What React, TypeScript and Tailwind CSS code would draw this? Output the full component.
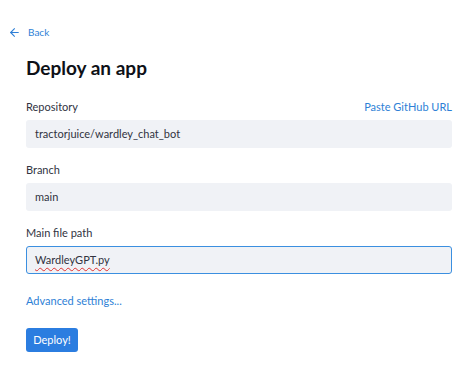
import { ArrowLeft } from 'lucide-react';

function Field({ label, value, focused, extra }: { label: string; value: string; focused?: boolean; extra?: string }) {
  return (
    <div className="flex flex-col">
      <div className="flex items-center justify-between h-[14px] mb-[6px]">
        <span className="text-[11px] text-[#31333f]">{label}</span>
        {extra && <span className="text-[11px] text-[#2e7fd6]">{extra}</span>}
      </div>
      <div
        className={
          focused
            ? 'h-[28px] rounded-[3px] bg-[#f0f2f6] border-[1.5px] border-[#3b8fe0] flex items-center px-[8px]'
            : 'h-[28px] rounded-[3px] bg-[#f0f2f6] flex items-center px-[9px]'
        }
      >
        <span
          className={
            focused
              ? 'text-[11px] text-[#31333f] underline decoration-wavy decoration-[#e03030] decoration-[1px] underline-offset-[3px]'
              : 'text-[11px] text-[#31333f]'
          }
        >
          {value}
        </span>
      </div>
    </div>
  );
}

export default function App() {
  return (
    <div className="w-[474px] h-[373px] bg-white font-['Lato','Noto_Sans',sans-serif] text-[#31333f]">
      <div className="flex items-center gap-[7px] pl-[8px] pt-[24px] h-[40px]">
        <ArrowLeft size={13} strokeWidth={2} className="text-[#2e7fd6]" />
        <span className="text-[10px] text-[#2e7fd6]">Back</span>
      </div>
      <div className="px-[26px] pr-[22px]">
        <h1 className="text-[19px] font-bold leading-none mt-[18px] text-[#0e1117]">Deploy an app</h1>
        <div className="mt-[23px] flex flex-col gap-[15px]">
          <Field label="Repository" value="tractorjuice/wardley_chat_bot" extra="Paste GitHub URL" />
          <Field label="Branch" value="main" />
          <Field label="Main file path" value="WardleyGPT.py" focused />
        </div>
        <div className="mt-[19px] text-[11px] leading-[16px] text-[#2e7fd6]">Advanced settings...</div>
        <button className="mt-[19px] h-[24px] w-[52px] rounded-[3px] bg-[#2b7de0] text-white text-[11px] flex items-center justify-center">
          Deploy!
        </button>
      </div>
    </div>
  );
}
